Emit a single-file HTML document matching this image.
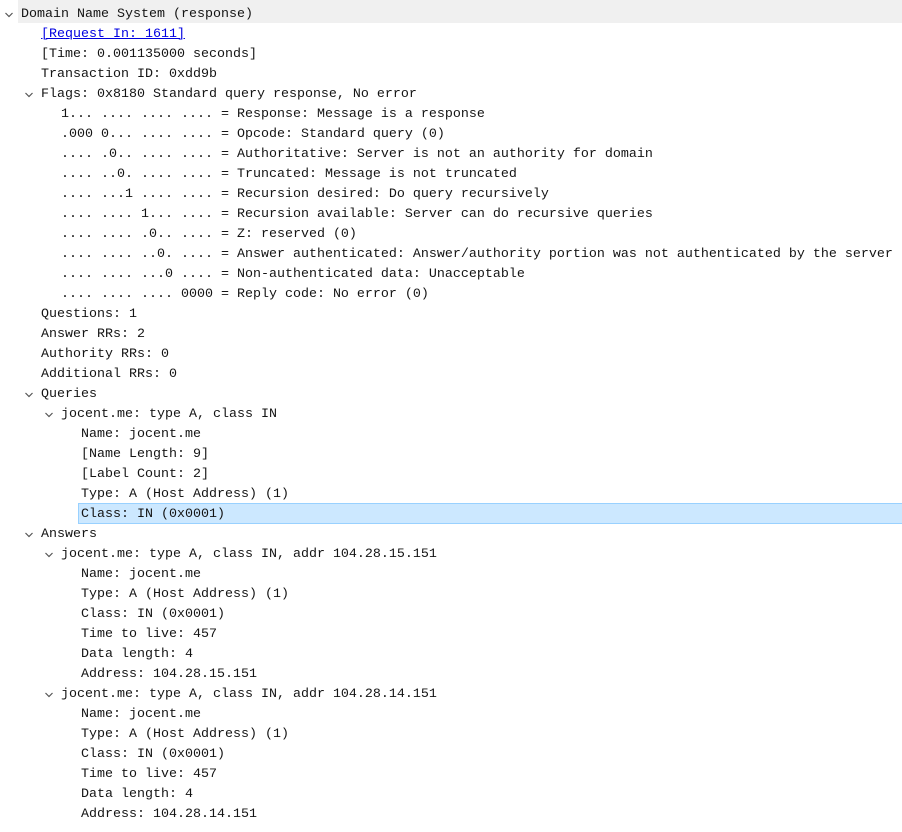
<!DOCTYPE html>
<html><head><meta charset="utf-8"><style>
html,body{margin:0;padding:0;background:#fff;width:902px;height:832px;overflow:hidden}
.r{position:absolute;left:0;right:0;height:20px;line-height:20px;font-family:"Liberation Mono",monospace;font-size:13.33px;color:#141414;white-space:pre}
.r span.t{position:absolute;top:2px}
.c{position:absolute;top:9px;width:8px;height:6px}
a{color:#0000e0;text-decoration:underline}
</style></head><body>
<div style="position:absolute;left:18px;top:0;right:0;height:23px;background:#f0f0f0"></div>
<div style="position:absolute;left:78px;top:503px;right:0;height:19px;background:#cce8ff;border:1px solid #99d1ff;border-right:none"></div>
<div id="c"></div>
<script>
var rows=[
[0,1,"Domain Name System (response)"],
[1,0,"<a>[Request In: 1611]</a>"],
[1,0,"[Time: 0.001135000 seconds]"],
[1,0,"Transaction ID: 0xdd9b"],
[1,1,"Flags: 0x8180 Standard query response, No error"],
[2,0,"1... .... .... .... = Response: Message is a response"],
[2,0,".000 0... .... .... = Opcode: Standard query (0)"],
[2,0,".... .0.. .... .... = Authoritative: Server is not an authority for domain"],
[2,0,".... ..0. .... .... = Truncated: Message is not truncated"],
[2,0,".... ...1 .... .... = Recursion desired: Do query recursively"],
[2,0,".... .... 1... .... = Recursion available: Server can do recursive queries"],
[2,0,".... .... .0.. .... = Z: reserved (0)"],
[2,0,".... .... ..0. .... = Answer authenticated: Answer/authority portion was not authenticated by the server"],
[2,0,".... .... ...0 .... = Non-authenticated data: Unacceptable"],
[2,0,".... .... .... 0000 = Reply code: No error (0)"],
[1,0,"Questions: 1"],
[1,0,"Answer RRs: 2"],
[1,0,"Authority RRs: 0"],
[1,0,"Additional RRs: 0"],
[1,1,"Queries"],
[2,1,"jocent.me: type A, class IN"],
[3,0,"Name: jocent.me"],
[3,0,"[Name Length: 9]"],
[3,0,"[Label Count: 2]"],
[3,0,"Type: A (Host Address) (1)"],
[3,0,"Class: IN (0x0001)"],
[1,1,"Answers"],
[2,1,"jocent.me: type A, class IN, addr 104.28.15.151"],
[3,0,"Name: jocent.me"],
[3,0,"Type: A (Host Address) (1)"],
[3,0,"Class: IN (0x0001)"],
[3,0,"Time to live: 457"],
[3,0,"Data length: 4"],
[3,0,"Address: 104.28.15.151"],
[2,1,"jocent.me: type A, class IN, addr 104.28.14.151"],
[3,0,"Name: jocent.me"],
[3,0,"Type: A (Host Address) (1)"],
[3,0,"Class: IN (0x0001)"],
[3,0,"Time to live: 457"],
[3,0,"Data length: 4"],
[3,0,"Address: 104.28.14.151"]
];
var h="";
rows.forEach(function(r,i){
 var top=3+20*i, x=21+20*r[0];
 h+='<div class="r" style="top:'+top+'px">';
 if(r[1]) h+='<svg class="c" style="left:'+(x-16)+'px" viewBox="0 0 8 6"><path d="M0.5 1 L4 4.5 L7.5 1" fill="none" stroke="#555" stroke-width="1.2"/></svg>';
 h+='<span class="t" style="left:'+x+'px">'+r[2]+'</span></div>';
});
document.getElementById("c").innerHTML=h;
</script>
</body></html>
